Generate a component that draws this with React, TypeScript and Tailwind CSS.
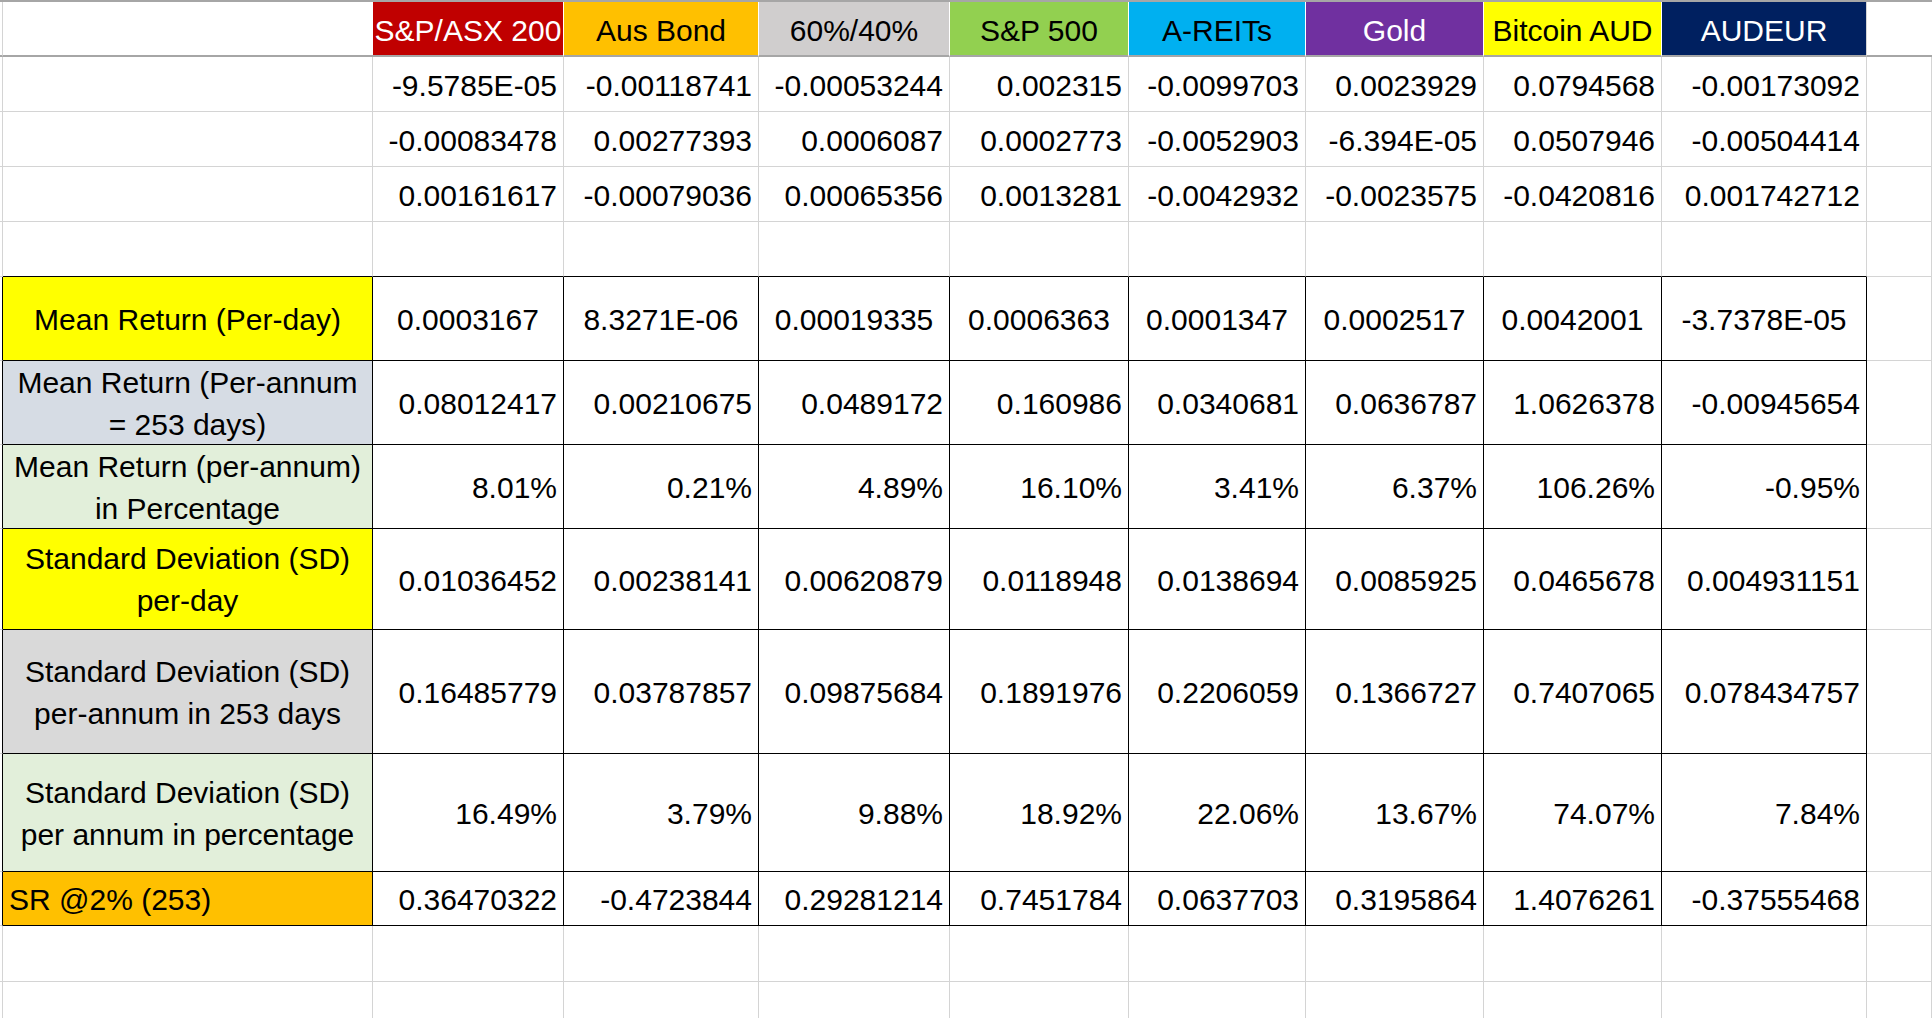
import React from "react";

type Head = { label: string; cls: string };

const heads: Head[] = [
  { label: "S&P/ASX 200", cls: "bg-[#c00000] text-white border-r-white" },
  { label: "Aus Bond", cls: "bg-[#ffc000] text-black border-r-white" },
  { label: "60%/40%", cls: "bg-[#d0cece] text-black border-r-white" },
  { label: "S&P 500", cls: "bg-[#92d050] text-black border-r-white" },
  { label: "A-REITs", cls: "bg-[#00b0f0] text-black border-r-white" },
  { label: "Gold", cls: "bg-[#7030a0] text-white border-r-white" },
  { label: "Bitcoin AUD", cls: "bg-[#ffff00] text-black border-r-white" },
  { label: "AUDEUR", cls: "bg-[#002060] text-white border-r-[#d4d4d4]" },
];

const dailyRows: string[][] = [
  ["-9.5785E-05", "-0.00118741", "-0.00053244", "0.002315", "-0.0099703", "0.0023929", "0.0794568", "-0.00173092"],
  ["-0.00083478", "0.00277393", "0.0006087", "0.0002773", "-0.0052903", "-6.394E-05", "0.0507946", "-0.00504414"],
  ["0.00161617", "-0.00079036", "0.00065356", "0.0013281", "-0.0042932", "-0.0023575", "-0.0420816", "0.001742712"],
];

type StatRow = {
  label: React.ReactNode;
  bg: string;
  values: string[];
  center?: boolean;
  left?: boolean;
};

const statRows: StatRow[] = [
  {
    label: "Mean Return (Per-day)",
    bg: "bg-[#ffff00]",
    center: true,
    values: ["0.0003167", "8.3271E-06", "0.00019335", "0.0006363", "0.0001347", "0.0002517", "0.0042001", "-3.7378E-05"],
  },
  {
    label: (
      <>
        Mean Return (Per-annum
        <br />= 253 days)
      </>
    ),
    bg: "bg-[#d6dce4]",
    values: ["0.08012417", "0.00210675", "0.0489172", "0.160986", "0.0340681", "0.0636787", "1.0626378", "-0.00945654"],
  },
  {
    label: (
      <>
        Mean Return (per-annum)
        <br />
        in Percentage
      </>
    ),
    bg: "bg-[#e2efda]",
    values: ["8.01%", "0.21%", "4.89%", "16.10%", "3.41%", "6.37%", "106.26%", "-0.95%"],
  },
  {
    label: (
      <>
        Standard Deviation (SD)
        <br />
        per-day
      </>
    ),
    bg: "bg-[#ffff00]",
    values: ["0.01036452", "0.00238141", "0.00620879", "0.0118948", "0.0138694", "0.0085925", "0.0465678", "0.004931151"],
  },
  {
    label: (
      <>
        Standard Deviation (SD)
        <br />
        per-annum in 253 days
      </>
    ),
    bg: "bg-[#d9d9d9]",
    values: ["0.16485779", "0.03787857", "0.09875684", "0.1891976", "0.2206059", "0.1366727", "0.7407065", "0.078434757"],
  },
  {
    label: (
      <>
        Standard Deviation (SD)
        <br />
        per annum in percentage
      </>
    ),
    bg: "bg-[#e2efda]",
    values: ["16.49%", "3.79%", "9.88%", "18.92%", "22.06%", "13.67%", "74.07%", "7.84%"],
  },
  {
    label: "SR @2% (253)",
    bg: "bg-[#ffc000]",
    left: true,
    values: ["0.36470322", "-0.4723844", "0.29281214", "0.7451784", "0.0637703", "0.3195864", "1.4076261", "-0.37555468"],
  },
];

// excel gridline vs table border
const grid = "border-r border-b border-r-[#d4d4d4] border-b-[#d4d4d4]";
const boxed = "border-r border-b border-black";

function EmptyRow({ tableBelow }: { tableBelow?: boolean }) {
  const inner = tableBelow
    ? "border-r border-b border-r-[#d4d4d4] border-b-black"
    : grid;
  return (
    <>
      <div className={grid} />
      {Array.from({ length: 9 }).map((_, i) => (
        <div key={i} className={inner} />
      ))}
      <div className={grid} />
    </>
  );
}

function DailyRow({ values }: { values: string[] }) {
  return (
    <>
      <div className={grid} />
      <div className={grid} />
      {values.map((v, i) => (
        <div key={i} className={`${grid} flex items-center justify-end pr-[6px] pt-[2px] whitespace-nowrap`}>
          {v}
        </div>
      ))}
      <div className={grid} />
    </>
  );
}

function Stat({ row }: { row: StatRow }) {
  return (
    <>
      <div className="border-r border-b border-r-black border-b-[#d4d4d4]" />
      <div
        className={`${boxed} ${row.bg} flex items-center whitespace-nowrap leading-[42px] pt-[2px] ${
          row.left ? "justify-start pl-[6px]" : "justify-center text-center"
        }`}
      >
        <div>{row.label}</div>
      </div>
      {row.values.map((v, i) => (
        <div
          key={i}
          className={`${boxed} flex items-center whitespace-nowrap pt-[2px] ${
            row.center ? "justify-center" : "justify-end pr-[6px]"
          }`}
        >
          {v}
        </div>
      ))}
      <div className={grid} />
    </>
  );
}

export default function App() {
  return (
    <div className="w-[1932px] h-[1018px] overflow-hidden bg-white text-black font-['Liberation_Sans',Arial,sans-serif] text-[30px]">
      <div className="grid grid-cols-[3px_370px_191px_195px_191px_179px_177px_178px_178px_205px_1fr] grid-rows-[55px_55px_55px_55px_55px_84px_84px_84px_101px_124px_118px_54px_56px_56px] border-t-2 border-t-[#a6a6a6]">
        {/* header row */}
        <div className="border-r border-r-[#d4d4d4] border-b-2 border-b-[#a6a6a6]" />
        <div className="border-b-2 border-b-[#a6a6a6]" />
        {heads.map((h) => (
          <div
            key={h.label}
            className={`border-r border-b-2 border-b-[#a6a6a6] ${h.cls} flex items-center justify-center pt-[3px] whitespace-nowrap`}
          >
            {h.label}
          </div>
        ))}
        <div className="border-b-2 border-b-[#a6a6a6]" />

        {dailyRows.map((r, i) => (
          <DailyRow key={i} values={r} />
        ))}
        <EmptyRow tableBelow />

        {statRows.map((r, i) => (
          <Stat key={i} row={r} />
        ))}

        <EmptyRow />
        <EmptyRow />
      </div>
    </div>
  );
}
